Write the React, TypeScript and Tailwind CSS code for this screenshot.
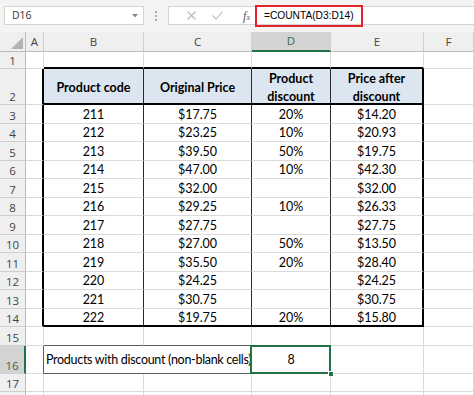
import React from "react";

type Row = [string, string, string, string];

const data: Row[] = [
  ["211", "$17.75", "20%", "$14.20"],
  ["212", "$23.25", "10%", "$20.93"],
  ["213", "$39.50", "50%", "$19.75"],
  ["214", "$47.00", "10%", "$42.30"],
  ["215", "$32.00", "", "$32.00"],
  ["216", "$29.25", "10%", "$26.33"],
  ["217", "$27.75", "", "$27.75"],
  ["218", "$27.00", "50%", "$13.50"],
  ["219", "$35.50", "20%", "$28.40"],
  ["220", "$24.25", "", "$24.25"],
  ["221", "$30.75", "", "$30.75"],
  ["222", "$19.75", "20%", "$15.80"],
];

function rightBorder(row: number, col: number): string {
  if (row >= 2 && row <= 14) {
    if (col === 1 || col === 5) return "border-r-2 border-r-black";
    if (col >= 2 && col <= 4) return "border-r border-r-[#2a2a2a]";
  }
  if (row === 16 && (col === 1 || col === 3)) return "border-r border-r-[#5a5a5a]";
  return "border-r border-r-[#dadada]";
}

function bottomBorder(row: number, col: number): string {
  if (col >= 2 && col <= 5 && (row === 1 || row === 2 || row === 14)) return "border-b-2 border-b-black";
  if ((row === 15 || row === 16) && (col === 2 || col === 3)) return "border-b border-b-[#5a5a5a]";
  return "border-b border-b-[#dadada]";
}

function Cell({
  row,
  col,
  children,
  className = "",
  span2 = false,
}: {
  row: number;
  col: number;
  children?: React.ReactNode;
  className?: string;
  span2?: boolean;
}) {
  return (
    <div
      className={`${span2 ? "col-span-2" : ""} ${rightBorder(row, col)} ${bottomBorder(
        row,
        col
      )} flex items-center overflow-visible whitespace-nowrap text-[12.5px] text-black ${className}`}
    >
      {children}
    </div>
  );
}

function RowHeader({ n, selected = false }: { n?: number; selected?: boolean }) {
  return (
    <div
      className={`flex items-end justify-center leading-none pb-[2px] text-[11.5px] font-['Open_Sans',_sans-serif] border-b border-b-[#cfcfcf] ${
        selected
          ? "bg-[#d3d3d3] text-[#3f5f4a] border-r-2 border-r-[#217346]"
          : "bg-[#efefef] text-[#444] border-r border-r-[#bdbdbd]"
      }`}
    >
      {n}
    </div>
  );
}

function ColHeader({ label, selected = false }: { label: string; selected?: boolean }) {
  return (
    <div
      className={`flex items-center justify-center text-[11.5px] font-['Open_Sans',_sans-serif] border-r border-r-[#cfcfcf] ${
        selected
          ? "bg-[#d3d3d3] text-[#3f6a50] border-b-2 border-b-[#217346]"
          : "bg-[#efefef] text-[#444] border-b border-b-[#bdbdbd]"
      }`}
    >
      {label}
    </div>
  );
}

export default function App() {
  const rows: React.ReactNode[] = [];

  rows.push(
    <React.Fragment key="r1">
      <RowHeader n={1} />
      {[1, 2, 3, 4, 5, 6].map((c) => (
        <Cell key={c} row={1} col={c} />
      ))}
    </React.Fragment>
  );

  rows.push(
    <React.Fragment key="r2">
      <RowHeader n={2} />
      <Cell row={2} col={1} />
      <Cell row={2} col={2} className="justify-center bg-[#dce6f1] font-bold pt-[4px]">
        Product code
      </Cell>
      <Cell row={2} col={3} className="justify-center bg-[#dce6f1] font-bold pt-[4px]">
        Original Price
      </Cell>
      <Cell row={2} col={4} className="justify-center bg-[#dce6f1] font-bold pt-[4px]">
        <div className="flex flex-col items-center leading-[18px]">
          <span>Product</span>
          <span>discount</span>
        </div>
      </Cell>
      <Cell row={2} col={5} className="justify-center bg-[#dce6f1] font-bold pt-[4px]">
        <div className="flex flex-col items-center leading-[18px]">
          <span>Price after</span>
          <span>discount</span>
        </div>
      </Cell>
      <Cell row={2} col={6} />
    </React.Fragment>
  );

  data.forEach((d, i) => {
    const r = i + 3;
    rows.push(
      <React.Fragment key={`r${r}`}>
        <RowHeader n={r} />
        <Cell row={r} col={1} />
        {d.map((v, j) => (
          <Cell key={j} row={r} col={j + 2} className="justify-center pt-[2px]">
            {v}
          </Cell>
        ))}
        <Cell row={r} col={6} />
      </React.Fragment>
    );
  });

  rows.push(
    <React.Fragment key="r15">
      <RowHeader n={15} />
      {[1, 2, 3, 4, 5, 6].map((c) => (
        <Cell key={c} row={15} col={c} />
      ))}
    </React.Fragment>
  );

  rows.push(
    <React.Fragment key="r16">
      <RowHeader n={16} selected />
      <Cell row={16} col={1} />
      <Cell row={16} col={3} span2 className="pl-[2px] pt-[1px] tracking-[-0.3px]">
        Products with discount (non-blank cells)
      </Cell>
      <Cell row={16} col={4} className="relative justify-center pt-[2px]">
        8
        <div className="absolute -left-[2px] -top-[1px] right-[-1px] bottom-[-1px] border-2 border-[#217346] z-10" />
        <div className="absolute right-[-4px] bottom-[-4px] w-[6px] h-[6px] bg-[#217346] border border-white z-20" />
      </Cell>
      <Cell row={16} col={5} />
      <Cell row={16} col={6} />
    </React.Fragment>
  );

  rows.push(
    <React.Fragment key="r17">
      <RowHeader n={17} />
      {[1, 2, 3, 4, 5, 6].map((c) => (
        <Cell key={c} row={17} col={c} />
      ))}
    </React.Fragment>
  );

  rows.push(
    <React.Fragment key="r18">
      <RowHeader />
      {[1, 2, 3, 4, 5, 6].map((c) => (
        <Cell key={c} row={18} col={c} />
      ))}
    </React.Fragment>
  );

  return (
    <div className="w-[474px] h-[395px] overflow-hidden bg-white font-['Lato',_sans-serif]">
      {/* formula bar */}
      <div className="h-[32px] bg-[#f3f3f3] flex items-start pt-[6px] pl-[4px]">
        <div className="w-[140px] h-[19px] bg-white border border-[#d4d4d4] flex items-center justify-between pl-[7px] pr-[5px]">
          <span className="text-[10.5px] text-[#333] font-['Open_Sans',_sans-serif]">D16</span>
          <svg width="6" height="4" viewBox="0 0 6 4">
            <path d="M0 0 L6 0 L3 3.5 Z" fill="#888" />
          </svg>
        </div>
        <div className="w-[24px] h-[19px] flex flex-col items-center justify-center gap-[2px]">
          <span className="w-[2px] h-[2px] bg-[#b0b0b0]" />
          <span className="w-[2px] h-[2px] bg-[#b0b0b0]" />
          <span className="w-[2px] h-[2px] bg-[#b0b0b0]" />
        </div>
        <div className="flex-1 h-[19px] bg-white border border-[#d4d4d4] border-r-0 flex items-center">
          <div className="w-[83px] flex items-center">
            <div className="w-[27px] flex justify-end">
              <svg width="9" height="9" viewBox="0 0 9 9">
                <path d="M0.5 0.5 L8.5 8.5 M8.5 0.5 L0.5 8.5" stroke="#b8b8b8" strokeWidth="1.1" />
              </svg>
            </div>
            <div className="w-[27px] flex justify-end">
              <svg width="11" height="9" viewBox="0 0 11 9">
                <path d="M0.5 4.5 L4 8 L10.5 0.5" stroke="#b8b8b8" strokeWidth="1.1" fill="none" />
              </svg>
            </div>
            <div className="w-[27px] flex justify-end">
              <span className="text-[12px] italic text-[#555] font-['Liberation_Serif',_serif] leading-none">
                f<span className="text-[8px]">x</span>
              </span>
            </div>
          </div>
          <div className="ml-[3px] h-[22px] w-[108px] border-2 border-[#e0242b] flex items-center pl-[7px] text-[10.2px] text-black font-['Liberation_Sans',_sans-serif]">
            =COUNTA(D3:D14)
          </div>
        </div>
      </div>

      {/* grid */}
      <div className="grid grid-cols-[26px_18px_100px_108px_79px_93px_50px] grid-rows-[20px_17px_36px_19px_18px_19px_18px_19px_18px_19px_18px_19px_18px_19px_18px_19px_28px_18px_18px]">
        <div className="bg-[#efefef] border-r border-r-[#bdbdbd] border-b border-b-[#bdbdbd] flex items-end justify-end pr-[2px] pb-[2px]">
          <svg width="12" height="12" viewBox="0 0 12 12">
            <path d="M12 0 L12 12 L0 12 Z" fill="#b4b4b4" />
          </svg>
        </div>
        <ColHeader label="A" />
        <ColHeader label="B" />
        <ColHeader label="C" />
        <ColHeader label="D" selected />
        <ColHeader label="E" />
        <ColHeader label="F" />
        {rows}
      </div>
    </div>
  );
}
